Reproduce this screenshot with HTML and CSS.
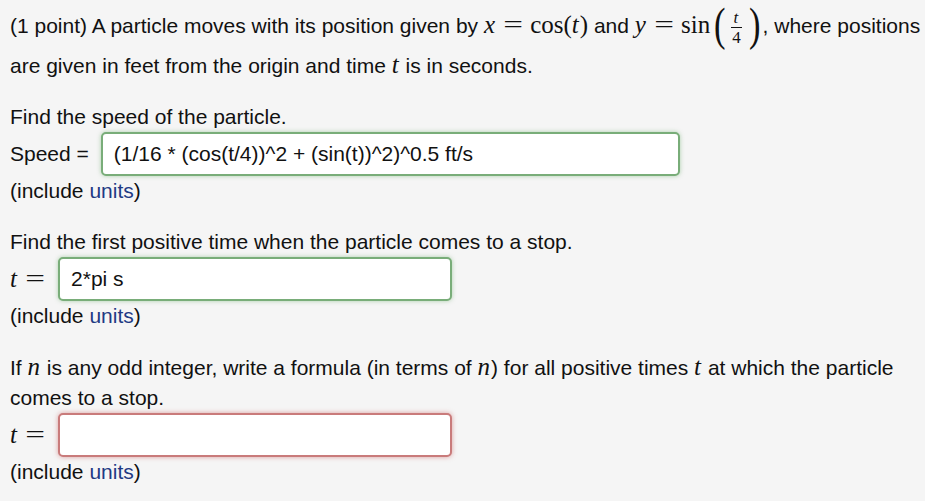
FILE: index.html
```html
<!DOCTYPE html>
<html>
<head>
<meta charset="utf-8">
<link rel="stylesheet" href="styles.css">
</head>
<body>
<div class="problem">
  <p class="intro"><span class="line1">(1 point) A particle moves with its position given by <span class="m"><i>x</i><span class="op">=</span>cos(<i>t</i>)</span> and <span class="m"><i>y</i><span class="op">=</span>sin<span class="paren">(</span><span class="frac"><span class="num"><i>t</i></span><span class="den">4</span></span><span class="paren">)</span></span>, where positions</span><br><span class="line2">are given in feet from the origin and time <span class="m"><i>t</i></span> is in seconds.</span></p>

  <section class="part">
    <p class="q">Find the speed of the particle.</p>
    <div class="row"><span class="label">Speed =</span><div class="answer ok wide">(1/16 * (cos(t/4))^2 + (sin(t))^2)^0.5 ft/s</div></div>
    <p class="hint">(include <span class="units">units</span>)</p>
  </section>

  <section class="part">
    <p class="q">Find the first positive time when the particle comes to a stop.</p>
    <div class="row"><span class="label m"><i>t</i><span class="op">=</span></span><div class="answer ok">2*pi s</div></div>
    <p class="hint">(include <span class="units">units</span>)</p>
  </section>

  <section class="part">
    <p class="q">If <span class="m"><i>n</i></span> is any odd integer, write a formula (in terms of <span class="m"><i>n</i></span>) for all positive times <span class="m"><i>t</i></span> at which the particle<br>comes to a stop.</p>
    <div class="row"><span class="label m"><i>t</i><span class="op">=</span></span><div class="answer bad"></div></div>
    <p class="hint">(include <span class="units">units</span>)</p>
  </section>
</div>
</body>
</html>
```

FILE: styles.css
```css
html, body {
  margin: 0;
  padding: 0;
  background: #f5f5f5;
}
body {
  font-family: "Liberation Sans", Arial, sans-serif;
  font-size: 21px;
  color: #111;
}
.problem {
  padding: 0 0 0 10px;
}
p {
  margin: 0;
  line-height: 30px;
}
.intro {
  white-space: nowrap;
}
.line1 {
  display: inline-block;
  height: 50px;
  line-height: 50px;
}
.line2 {
  display: inline-block;
  line-height: 30px;
}
.m {
  font-family: "Liberation Serif", "Times New Roman", serif;
  font-size: 25px;
}
.m i {
  font-style: italic;
  font-family: "Liberation Serif", "Times New Roman", serif;
  padding-right: 1px;
}
.op {
  display: inline-block;
  transform: scaleX(1.4);
  margin: 0 10px;
}
.paren {
  font-family: "Liberation Serif", serif;
  font-size: 46px;
  vertical-align: -7px;
  line-height: 1;
  display: inline-block;
  transform: scaleX(0.75);
  margin: 0 0 0 2px;
}
.frac {
  display: inline-flex;
  flex-direction: column;
  align-items: center;
  vertical-align: 10px;
  font-size: 17px;
  line-height: 16px;
  padding: 0 3px;
}
.num {
  border-bottom: 1px solid #111;
  padding: 0 3px 1px;
}
.den {
  padding-top: 2px;
}
.part {
  margin-top: 21px;
}
.row {
  display: flex;
  align-items: center;
  height: 44px;
}
.label {
  margin-right: 12px;
  white-space: nowrap;
}
.label.m {
  margin-right: 6px;
}
.answer {
  box-sizing: border-box;
  height: 44px;
  width: 394px;
  background: #fff;
  border-radius: 5px;
  padding: 0 11px;
  display: flex;
  align-items: center;
  font-size: 21px;
}
.answer.wide {
  width: 579px;
}
.ok {
  border: 2px solid #79ad79;
  box-shadow: 0 0 4px rgba(100, 170, 100, 0.5);
}
.bad {
  border: 2px solid #c97b7b;
  box-shadow: 0 0 5px rgba(200, 90, 90, 0.55);
}
.units {
  color: #1f3a84;
}
```
